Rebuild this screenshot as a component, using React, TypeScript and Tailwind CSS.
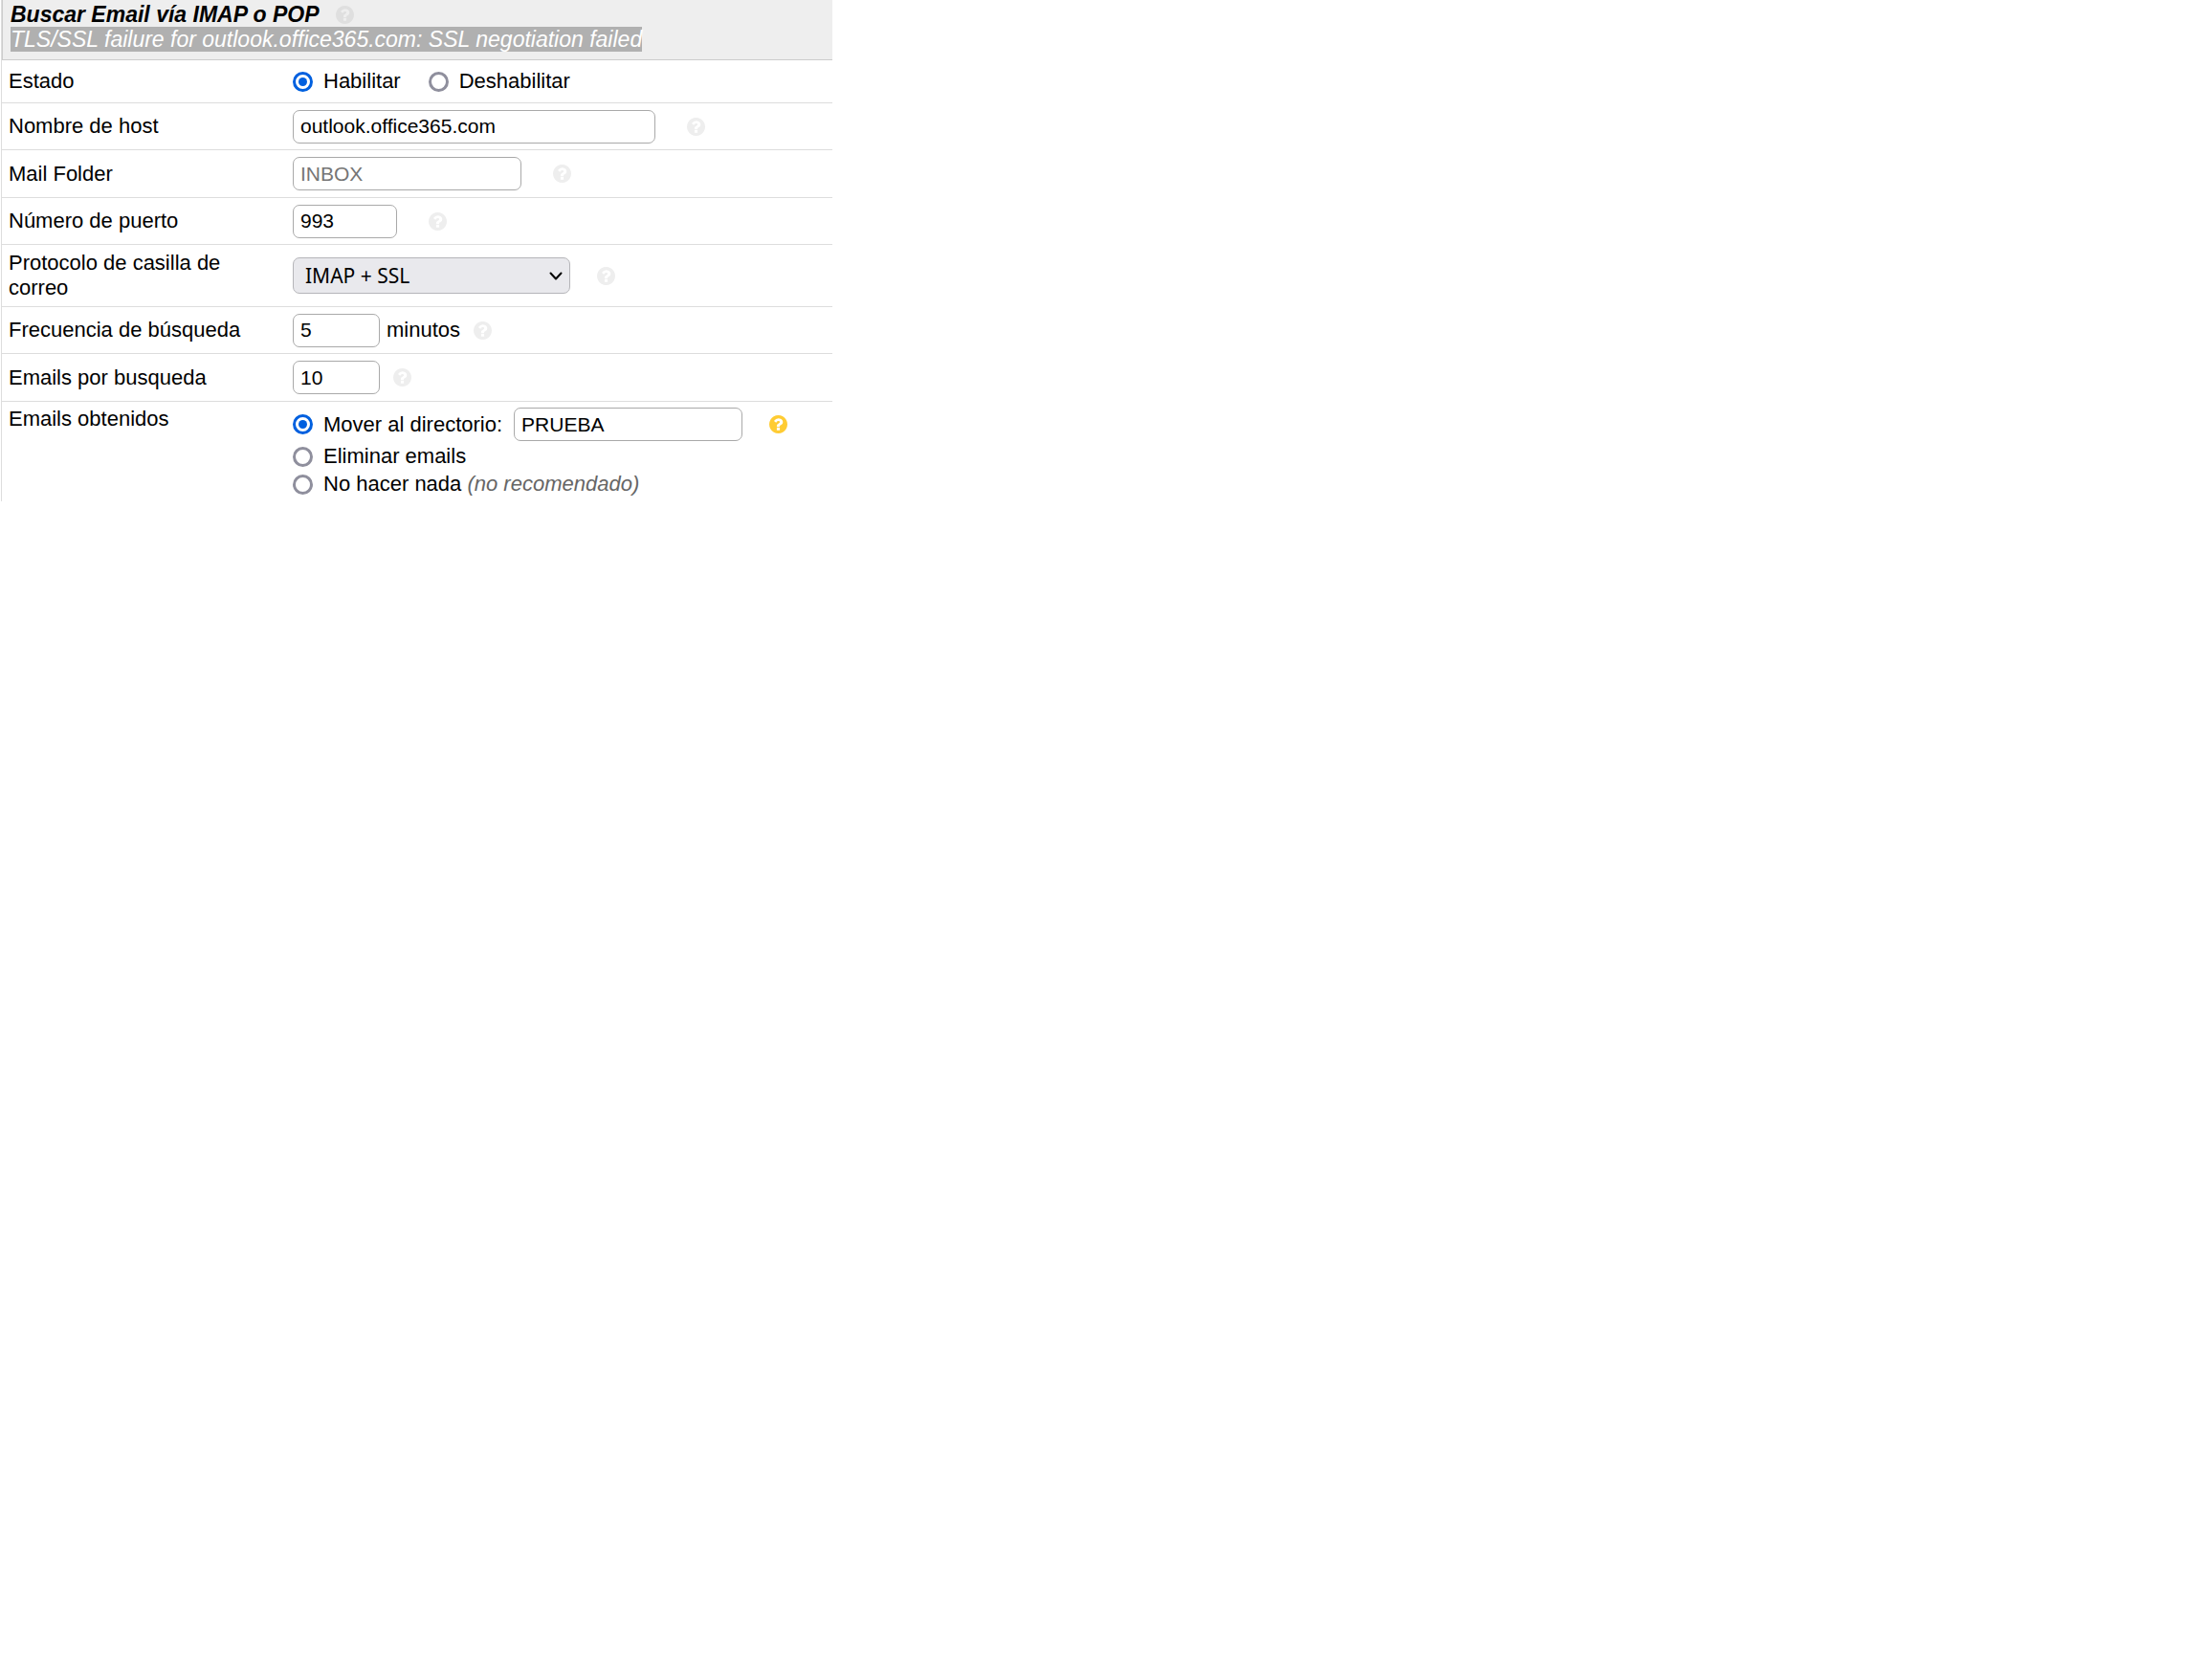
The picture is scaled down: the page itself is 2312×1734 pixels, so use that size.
import { useId, useState } from 'react'
import type { InputHTMLAttributes, ReactNode } from 'react'
import { clsx } from 'clsx'

function HelpTip({ topic, className }: { topic: string; className?: string }) {
  return (
    <button type="button" aria-label={`Ayuda: ${topic}`} className={clsx('shrink-0', className)}>
      <svg viewBox="128 128 1536 1536" className="block size-[19px] fill-current" aria-hidden>
        <path d="M1024 1376v-192q0-14-9-23t-23-9h-192q-14 0-23 9t-9 23v192q0 14 9 23t23 9h192q14 0 23-9t9-23zm256-672q0-88-55.5-163t-138.5-116-170-41q-243 0-371 213-15 24 8 42l132 100q7 6 19 6 16 0 25-12 53-68 86-92 34-24 86-24 48 0 85.5 26t37.5 59q0 38-20 61t-68 45q-63 28-115.5 86.5t-52.5 125.5v36q0 14 9 23t23 9h192q14 0 23-9t9-23q0-19 21.5-49.5t54.5-49.5q32-18 49-28.5t46-35 44.5-48 28-60.5 12.5-81zm384 192q0 209-103 385.5t-279.5 279.5-385.5 103-385.5-103-279.5-279.5-103-385.5 103-385.5 279.5-279.5 385.5-103 385.5 103 279.5 279.5 103 385.5z" />
      </svg>
    </button>
  )
}

function TextField({ className, ...props }: InputHTMLAttributes<HTMLInputElement>) {
  return (
    <input
      type="text"
      className={clsx(
        'h-[35px] rounded-[7px] border border-[#a9a9a9] bg-white px-[7px] text-[21px] placeholder:text-[#757575]',
        className,
      )}
      {...props}
    />
  )
}

interface RadioProps {
  name: string
  checked: boolean
  onChange: () => void
  children: ReactNode
}

function Radio({ name, checked, onChange, children }: RadioProps) {
  return (
    <label className="flex items-center gap-[11px]">
      <input
        type="radio"
        name={name}
        checked={checked}
        onChange={onChange}
        className="size-[21px] shrink-0 appearance-none rounded-full border-3 border-[#8f8f9d] bg-white
                   checked:border-[#0060df] checked:bg-[#0060df] checked:bg-clip-content checked:p-[3px]"
      />
      <span>{children}</span>
    </label>
  )
}

function Row({ label, htmlFor, className, children }: {
  label: string
  htmlFor?: string
  className?: string
  children: ReactNode
}) {
  return (
    <div className={clsx('grid grid-cols-[297px_1fr] items-center border-b border-[#dddddd] pl-[7px]', className)}>
      {htmlFor ? (
        <label htmlFor={htmlFor} className="pr-10">{label}</label>
      ) : (
        <span className="pr-10">{label}</span>
      )}
      <div className="flex items-center">{children}</div>
    </div>
  )
}

export default function App() {
  const id = useId()
  const [enabled, setEnabled] = useState(true)
  const [postFetch, setPostFetch] = useState('move')

  return (
    <main className="min-h-screen bg-white font-['Liberation_Sans',Arial,sans-serif] text-[22px] leading-[26px] text-black">
      <form className="ml-px max-w-[869px] border-l border-[#dddddd]">
        <header className="border-b border-l border-[#cccccc] bg-[#eeeeee] pt-[2px] pb-2 pl-2 text-[23px] italic">
          <div className="flex items-center gap-[17px]">
            <h1 className="font-bold">Buscar Email vía IMAP o POP</h1>
            <HelpTip topic="Buscar Email" className="text-[#dfdfdf]" />
          </div>
          <p role="alert">
            <span className="bg-[#b0b0b0] text-white">
              TLS/SSL failure for outlook.office365.com: SSL negotiation failed
            </span>
          </p>
        </header>

        <Row label="Estado" className="h-[45px]">
          <div role="radiogroup" aria-label="Estado" className="flex gap-[29px]">
            <Radio name="state" checked={enabled} onChange={() => setEnabled(true)}>Habilitar</Radio>
            <Radio name="state" checked={!enabled} onChange={() => setEnabled(false)}>Deshabilitar</Radio>
          </div>
        </Row>

        <Row label="Nombre de host" htmlFor={`${id}-host`} className="h-[49px]">
          <TextField id={`${id}-host`} defaultValue="outlook.office365.com" className="w-[379px]" />
          <HelpTip topic="Nombre de host" className="ml-[33px] text-[#eeeeee]" />
        </Row>

        <Row label="Mail Folder" htmlFor={`${id}-folder`} className="h-[50px]">
          <TextField id={`${id}-folder`} placeholder="INBOX" className="w-[239px]" />
          <HelpTip topic="Mail Folder" className="ml-[33px] text-[#eeeeee]" />
        </Row>

        <Row label="Número de puerto" htmlFor={`${id}-port`} className="h-[49px]">
          <TextField id={`${id}-port`} defaultValue="993" className="w-[109px]" />
          <HelpTip topic="Número de puerto" className="ml-[33px] text-[#eeeeee]" />
        </Row>

        <Row label="Protocolo de casilla de correo" htmlFor={`${id}-protocol`} className="min-h-[65px]">
          <div className="relative">
            <select
              id={`${id}-protocol`}
              defaultValue="imap-ssl"
              className="block h-[38px] w-[290px] appearance-none rounded-[7px] border border-[#b5b5b9] bg-[#e9e9ed] px-3
                         font-['Noto_Sans',sans-serif] text-[21px]"
            >
              <option value="imap-ssl">IMAP + SSL</option>
              <option value="imap">IMAP</option>
              <option value="pop-ssl">POP + SSL</option>
              <option value="pop">POP</option>
            </select>
            <svg
              viewBox="0 0 14 10"
              className="pointer-events-none absolute top-[15px] right-2 h-[10px] w-[14px] fill-none stroke-black stroke-2"
              aria-hidden
            >
              <path d="M1.500 1.500 7 7.500l5.500-6" strokeLinecap="round" strokeLinejoin="round" />
            </svg>
          </div>
          <HelpTip topic="Protocolo" className="ml-7 text-[#eeeeee]" />
        </Row>

        <Row label="Frecuencia de búsqueda" htmlFor={`${id}-freq`} className="h-[49px]">
          <TextField id={`${id}-freq`} defaultValue="5" className="w-[91px]" />
          <span className="ml-[7px]">minutos</span>
          <HelpTip topic="Frecuencia de búsqueda" className="ml-[14px] text-[#eeeeee]" />
        </Row>

        <Row label="Emails por busqueda" htmlFor={`${id}-max`} className="h-[50px]">
          <TextField id={`${id}-max`} defaultValue="10" className="w-[91px]" />
          <HelpTip topic="Emails por busqueda" className="ml-[14px] text-[#eeeeee]" />
        </Row>

        <div
          role="radiogroup"
          aria-labelledby={`${id}-postfetch`}
          className="grid grid-cols-[297px_1fr] items-start pt-[5px] pb-[5px] pl-[7px]"
        >
          <span id={`${id}-postfetch`}>Emails obtenidos</span>
          <div className="flex flex-col gap-[3px] pt-px">
            <div className="flex items-center">
              <Radio name="postfetch" checked={postFetch === 'move'} onChange={() => setPostFetch('move')}>
                Mover al directorio:
              </Radio>
              <TextField aria-label="Directorio" defaultValue="PRUEBA" className="ml-3 w-[239px]" />
              <HelpTip topic="Emails obtenidos" className="ml-7 text-[#ffcc33]" />
            </div>
            <Radio name="postfetch" checked={postFetch === 'delete'} onChange={() => setPostFetch('delete')}>
              Eliminar emails
            </Radio>
            <Radio name="postfetch" checked={postFetch === 'nothing'} onChange={() => setPostFetch('nothing')}>
              No hacer nada <em className="text-[#666666]">(no recomendado)</em>
            </Radio>
          </div>
        </div>
      </form>
    </main>
  )
}
